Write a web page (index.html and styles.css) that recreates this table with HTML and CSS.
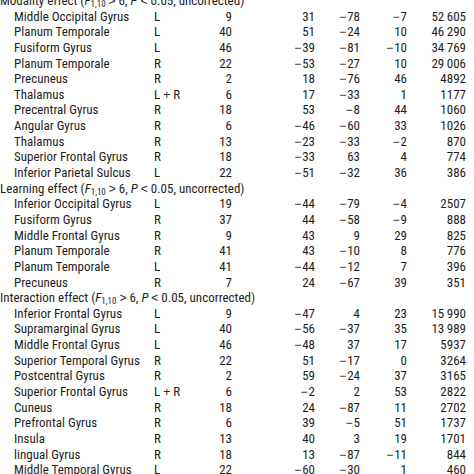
FILE: index.html
```html
<!DOCTYPE html>
<html>
<head>
<meta charset="utf-8">
<link rel="stylesheet" href="styles.css">
</head>
<body>
<div class="tbl">
  <div class="hd">Modality effect (<i>F</i><sub>1,10</sub> <span class="op">&gt;</span> 6, <i>P</i> <span class="op">&lt;</span> 0.05, uncorrected)</div>
  <div class="n">Middle Occipital Gyrus</div><div class="h">L</div><div class="r">9</div><div class="r">31</div><div class="r"><span class="m">−</span>78</div><div class="r"><span class="m">−</span>7</div><div class="r">52&#8201;605</div>
  <div class="n">Planum Temporale</div><div class="h">L</div><div class="r">40</div><div class="r">51</div><div class="r"><span class="m">−</span>24</div><div class="r">10</div><div class="r">46&#8201;290</div>
  <div class="n">Fusiform Gyrus</div><div class="h">L</div><div class="r">46</div><div class="r"><span class="m">−</span>39</div><div class="r"><span class="m">−</span>81</div><div class="r"><span class="m">−</span>10</div><div class="r">34&#8201;769</div>
  <div class="n">Planum Temporale</div><div class="h">R</div><div class="r">22</div><div class="r"><span class="m">−</span>53</div><div class="r"><span class="m">−</span>27</div><div class="r">10</div><div class="r">29&#8201;006</div>
  <div class="n">Precuneus</div><div class="h">R</div><div class="r">2</div><div class="r">18</div><div class="r"><span class="m">−</span>76</div><div class="r">46</div><div class="r">4892</div>
  <div class="n">Thalamus</div><div class="h">L <span class="op">+</span> R</div><div class="r">6</div><div class="r">17</div><div class="r"><span class="m">−</span>33</div><div class="r">1</div><div class="r">1177</div>
  <div class="n">Precentral Gyrus</div><div class="h">R</div><div class="r">18</div><div class="r">53</div><div class="r"><span class="m">−</span>8</div><div class="r">44</div><div class="r">1060</div>
  <div class="n">Angular Gyrus</div><div class="h">R</div><div class="r">6</div><div class="r"><span class="m">−</span>46</div><div class="r"><span class="m">−</span>60</div><div class="r">33</div><div class="r">1026</div>
  <div class="n">Thalamus</div><div class="h">R</div><div class="r">13</div><div class="r"><span class="m">−</span>23</div><div class="r"><span class="m">−</span>33</div><div class="r"><span class="m">−</span>2</div><div class="r">870</div>
  <div class="n">Superior Frontal Gyrus</div><div class="h">R</div><div class="r">18</div><div class="r"><span class="m">−</span>33</div><div class="r">63</div><div class="r">4</div><div class="r">774</div>
  <div class="n">Inferior Parietal Sulcus</div><div class="h">L</div><div class="r">22</div><div class="r"><span class="m">−</span>51</div><div class="r"><span class="m">−</span>32</div><div class="r">36</div><div class="r">386</div>
  <div class="hd">Learning effect (<i>F</i><sub>1,10</sub> <span class="op">&gt;</span> 6, <i>P</i> <span class="op">&lt;</span> 0.05, uncorrected)</div>
  <div class="n">Inferior Occipital Gyrus</div><div class="h">L</div><div class="r">19</div><div class="r"><span class="m">−</span>44</div><div class="r"><span class="m">−</span>79</div><div class="r"><span class="m">−</span>4</div><div class="r">2507</div>
  <div class="n">Fusiform Gyrus</div><div class="h">R</div><div class="r">37</div><div class="r">44</div><div class="r"><span class="m">−</span>58</div><div class="r"><span class="m">−</span>9</div><div class="r">888</div>
  <div class="n">Middle Frontal Gyrus</div><div class="h">R</div><div class="r">9</div><div class="r">43</div><div class="r">9</div><div class="r">29</div><div class="r">825</div>
  <div class="n">Planum Temporale</div><div class="h">R</div><div class="r">41</div><div class="r">43</div><div class="r"><span class="m">−</span>10</div><div class="r">8</div><div class="r">776</div>
  <div class="n">Planum Temporale</div><div class="h">L</div><div class="r">41</div><div class="r"><span class="m">−</span>44</div><div class="r"><span class="m">−</span>12</div><div class="r">7</div><div class="r">396</div>
  <div class="n">Precuneus</div><div class="h">R</div><div class="r">7</div><div class="r">24</div><div class="r"><span class="m">−</span>67</div><div class="r">39</div><div class="r">351</div>
  <div class="hd">Interaction effect (<i>F</i><sub>1,10</sub> <span class="op">&gt;</span> 6, <i>P</i> <span class="op">&lt;</span> 0.05, uncorrected)</div>
  <div class="n">Inferior Frontal Gyrus</div><div class="h">L</div><div class="r">9</div><div class="r"><span class="m">−</span>47</div><div class="r">4</div><div class="r">23</div><div class="r">15&#8201;990</div>
  <div class="n">Supramarginal Gyrus</div><div class="h">L</div><div class="r">40</div><div class="r"><span class="m">−</span>56</div><div class="r"><span class="m">−</span>37</div><div class="r">35</div><div class="r">13&#8201;989</div>
  <div class="n">Middle Frontal Gyrus</div><div class="h">L</div><div class="r">46</div><div class="r"><span class="m">−</span>48</div><div class="r">37</div><div class="r">17</div><div class="r">5937</div>
  <div class="n">Superior Temporal Gyrus</div><div class="h">R</div><div class="r">22</div><div class="r">51</div><div class="r"><span class="m">−</span>17</div><div class="r">0</div><div class="r">3264</div>
  <div class="n">Postcentral Gyrus</div><div class="h">R</div><div class="r">2</div><div class="r">59</div><div class="r"><span class="m">−</span>24</div><div class="r">37</div><div class="r">3165</div>
  <div class="n">Superior Frontal Gyrus</div><div class="h">L <span class="op">+</span> R</div><div class="r">6</div><div class="r"><span class="m">−</span>2</div><div class="r">2</div><div class="r">53</div><div class="r">2822</div>
  <div class="n">Cuneus</div><div class="h">R</div><div class="r">18</div><div class="r">24</div><div class="r"><span class="m">−</span>87</div><div class="r">11</div><div class="r">2702</div>
  <div class="n">Prefrontal Gyrus</div><div class="h">R</div><div class="r">6</div><div class="r">39</div><div class="r"><span class="m">−</span>5</div><div class="r">51</div><div class="r">1737</div>
  <div class="n">Insula</div><div class="h">R</div><div class="r">13</div><div class="r">40</div><div class="r">3</div><div class="r">19</div><div class="r">1701</div>
  <div class="n">lingual Gyrus</div><div class="h">R</div><div class="r">18</div><div class="r">13</div><div class="r"><span class="m">−</span>87</div><div class="r"><span class="m">−</span>11</div><div class="r">844</div>
  <div class="n">Middle Temporal Gyrus</div><div class="h">L</div><div class="r">22</div><div class="r"><span class="m">−</span>60</div><div class="r"><span class="m">−</span>30</div><div class="r">1</div><div class="r">460</div>
</div>
</body>
</html>
```

FILE: styles.css
```css
html, body {
  margin: 0;
  padding: 0;
  background: #ffffff;
  overflow: hidden;
}
.tbl {
  display: grid;
  grid-template-columns: 154px 40px 38px 83px 45px 47px 59px;
  grid-auto-rows: 15.65px;
  margin-top: -7px;
  font-family: "Roboto Condensed", "DejaVu Sans Condensed", sans-serif;
  font-size: 13px;
  line-height: 15.65px;
  color: #1e1e1e;
}
.hd {
  grid-column: 1 / -1;
  white-space: nowrap;
}
.hd sub {
  font-size: 9px;
  line-height: 0;
  vertical-align: -2px;
}
.op {
  font-family: "Liberation Sans", sans-serif;
  font-size: 12px;
}
.m {
  font-family: "Liberation Sans", sans-serif;
  font-size: 12px;
  padding-right: 1px;
}
.n {
  padding-left: 14px;
  white-space: nowrap;
}
.h {
  white-space: nowrap;
}
.r {
  text-align: right;
  white-space: nowrap;
}
```
